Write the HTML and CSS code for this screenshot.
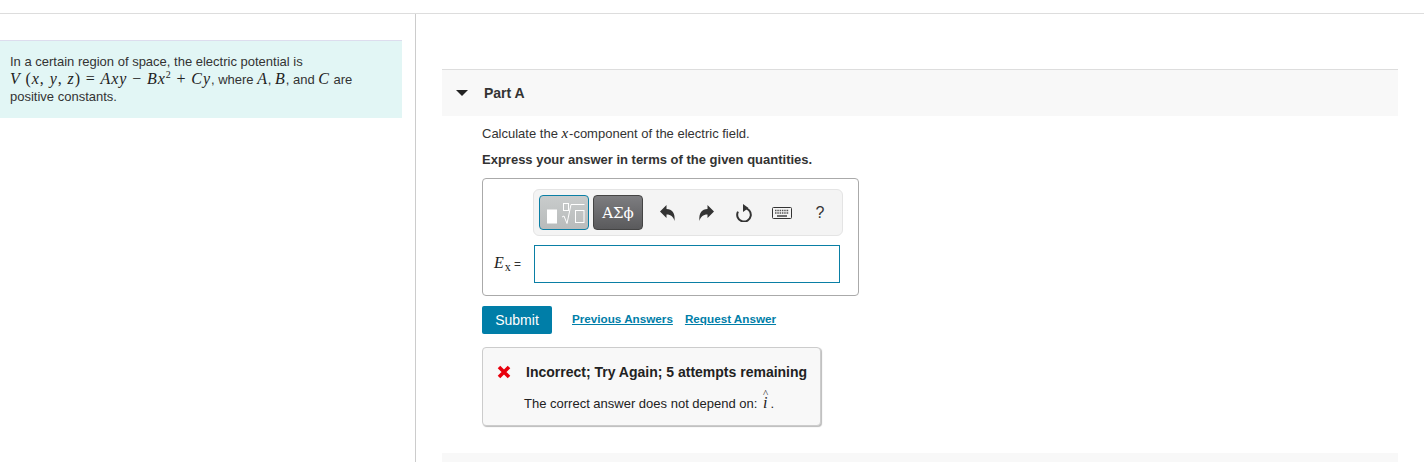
FILE: index.html
```html
<!DOCTYPE html>
<html lang="en">
<head>
    <meta charset="UTF-8">
    <title>Part A</title>
    <link rel="stylesheet" href="styles.css">
</head>
<body>
    <div class="topbar"></div>
    <div class="layout">
        <div class="left">
            <div class="intro">
                In a certain region of space, the electric potential is<br>
                <span class="math big"><i>V</i> (<i>x</i>, <i>y</i>, <i>z</i>) = <i>Axy</i> − <i>Bx</i><sup>2</sup> + <i>Cy</i></span>, where <span class="math big"><i>A</i></span>, <span class="math big"><i>B</i></span>, and <span class="math big"><i>C</i></span> are<br>
                positive constants.
            </div>
        </div>
        <div class="right">
            <div class="part-head">
                <svg class="caret" width="12" height="6" viewBox="0 0 12 6"><path d="M0 0h12L6 6z" fill="#222"/></svg>
                <span>Part A</span>
            </div>
            <div class="part-body">
                <p class="question">Calculate the <span class="math"><i>x</i></span>-component of the electric field.</p>
                <p class="instruction">Express your answer in terms of the given quantities.</p>
                <div class="answer-box">
                    <div class="toolbar">
                        <button class="tool tool-templates">
                            <svg width="46" height="28" viewBox="0 0 46 28">
                                <rect x="6" y="10.500" width="10" height="14" fill="#fff"/>
                                <g fill="none" stroke="#fff" stroke-width="1">
                                    <rect x="22.500" y="4.500" width="5" height="7"/>
                                    <path d="M21 18l2-1 3 7.500 4-19h13.500"/>
                                    <rect x="34.500" y="11.500" width="8.500" height="12"/>
                                </g>
                            </svg>
                        </button>
                        <button class="tool tool-symbols">ΑΣϕ</button>
                        <div class="actions">
                            <svg width="16" height="16" viewBox="0 0 16 16"><path d="M0 6.500L6.500 0v4c5.500 0 9 4 8 12-1-4-3.500-6.500-8-6.500V13z" fill="#333"/></svg>
                            <svg width="16" height="16" viewBox="0 0 16 16"><path d="M16 6.500L9.500 0v4c-5.500 0-9 4-8 12 1-4 3.500-6.500 8-6.500V13z" fill="#333"/></svg>
                            <svg width="18" height="18" viewBox="0 0 18 18"><path d="M9 4a6.800 6.800 0 1 1-6 3.600" fill="none" stroke="#333" stroke-width="2"/><path d="M8 0l5.500 4L8 8z" fill="#333"/></svg>
                            <svg width="20" height="12" viewBox="0 0 20 12"><rect x=".5" y=".5" width="19" height="11" rx="1" fill="#f4f4f4" stroke="#333"/><path d="M3 3.500h14M3 6h14" stroke="#555" stroke-width="1.500" stroke-dasharray="1.500 .8"/><path d="M5 9h10" stroke="#444" stroke-width="1.500"/></svg>
                            <span class="help">?</span>
                        </div>
                    </div>
                    <div class="answer-row">
                        <span class="answer-label"><span class="math big"><i>E</i><sub>x</sub></span> =</span>
                        <div class="answer-input"></div>
                    </div>
                </div>
                <div class="submit-row">
                    <button class="submit">Submit</button>
                    <a class="link" href="#">Previous Answers</a>
                    <a class="link" href="#">Request Answer</a>
                </div>
                <div class="feedback">
                    <div class="feedback-title">
                        <svg width="14" height="14" viewBox="0 0 14 14"><path d="M2 2l10 10M12 2L2 12" stroke="#e8000d" stroke-width="3.600"/></svg>
                        <span>Incorrect; Try Again; 5 attempts remaining</span>
                    </div>
                    <div class="feedback-text">The correct answer does not depend on: <span class="math big hat"><i>i</i></span>.</div>
                </div>
            </div>
            <div class="part-next"></div>
        </div>
    </div>
</body>
</html>
```
FILE: styles.css
```css
html, body {
    height: 462px;
    overflow: hidden;
}
body {
    margin: 0;
    background: white;
    color: #333;
    font-family: "Liberation Sans", Arial, sans-serif;
    font-size: 13px;
}
.topbar {
    height: 13px;
    border-bottom: 1px solid #ddd;
}
.layout {
    display: flex;
    height: 448px;
}
.left {
    width: 415px;
    flex: none;
    padding-top: 26px;
    border-right: 1px solid #ccc;
}
.intro {
    width: 392px;
    height: 54px;
    padding: 12px 0 11px 10px;
    background: #e2f6f5;
    border-top: 1px solid #dde;
    font-size: 13px;
    line-height: 17.500px;
}
.math {
    font-family: "Liberation Serif", "Times New Roman", serif;
    font-size: 15px;
    line-height: 0;
    color: #222;
    letter-spacing: .9px;
}
.math.big {
    font-size: 16px;
}
.math sup {
    font-size: 10px;
    line-height: 0;
}
.math sub {
    font-size: 12px;
    line-height: 0;
    letter-spacing: 0;
    vertical-align: -3px;
}
.right {
    flex: 1;
    padding: 55px 26px 0 26px;
}
.part-head {
    display: flex;
    align-items: center;
    height: 46px;
    background: #f8f8f8;
    border-top: 1px solid #ddd;
    font-size: 14px;
    font-weight: bold;
    color: #333;
}
.caret {
    margin-left: 14px;
    margin-right: 16px;
}
.part-body {
    padding-left: 40px;
    height: 337px;
}
.question {
    margin: 0;
    padding-top: 10px;
    height: 16px;
    line-height: 16px;
    font-size: 13px;
}
.instruction {
    margin: 10px 0 0;
    font-weight: bold;
    font-size: 13px;
    line-height: 16px;
}
.answer-box {
    width: 375px;
    height: 116px;
    margin-top: 10px;
    border: 1px solid #aaa;
    border-radius: 4px;
}
.toolbar {
    display: flex;
    align-items: center;
    width: 303px;
    height: 45px;
    margin: 10px 0 0 50px;
    padding-left: 5px;
    background: #f4f4f4;
    border: 1px solid #e4e4e4;
    border-radius: 6px;
}
.tool {
    flex: none;
    height: 35px;
    width: 50px;
    margin-right: 4px;
    padding: 0;
    border-radius: 4px;
    display: flex;
    align-items: center;
    justify-content: center;
}
.tool-templates {
    background: linear-gradient(#c9cccc, #b8bbbb);
    border: 1px solid #0a7fa5;
}
.tool-symbols {
    background: linear-gradient(#7d7d80, #5a5a5c);
    border: 1px solid #444;
    color: white;
    font-family: "DejaVu Serif", "Liberation Serif", serif;
    font-size: 15px;
}
.actions {
    display: flex;
    align-items: center;
    margin-left: 2px;
}
.actions svg, .help {
    width: 38px;
    text-align: center;
}
.help {
    color: #333;
    font-size: 16px;
}
.answer-row {
    display: flex;
    align-items: center;
    margin-top: 9px;
}
.answer-label {
    width: 51px;
    padding-left: 11px;
    box-sizing: border-box;
    font-size: 12px;
    white-space: nowrap;
}
.answer-input {
    width: 304px;
    height: 36px;
    border: 1px solid #0a7fa5;
}
.submit-row {
    display: flex;
    align-items: center;
    margin-top: 10px;
}
.submit {
    width: 70px;
    height: 28px;
    background: #007ea8;
    border: none;
    border-radius: 2px;
    color: white;
    font-family: "Liberation Sans", Arial, sans-serif;
    font-size: 14px;
    margin-right: 20px;
}
.link {
    color: #007ea8;
    font-size: 11.700px;
    font-weight: bold;
    margin-right: 12px;
    margin-bottom: 4px;
}
.feedback {
    width: 337px;
    height: 77px;
    margin-top: 13px;
    background: #f8f8f8;
    border: 1px solid #ccc;
    border-radius: 4px;
    box-shadow: 1px 1px 1px #bbb;
}
.feedback-title {
    display: flex;
    align-items: center;
    gap: 15px;
    padding: 16px 0 0 14px;
    font-size: 14px;
    font-weight: bold;
    color: #222;
}
.feedback-text {
    margin-top: 16px;
    padding-left: 41px;
    font-size: 13px;
    color: #222;
}
.hat {
    position: relative;
    padding: 0 2px;
}
.hat::before {
    content: "^";
    position: absolute;
    top: -1px;
    left: 2px;
    font-size: 11px;
}
.part-next {
    height: 20px;
    background: #f8f8f8;
}
```
